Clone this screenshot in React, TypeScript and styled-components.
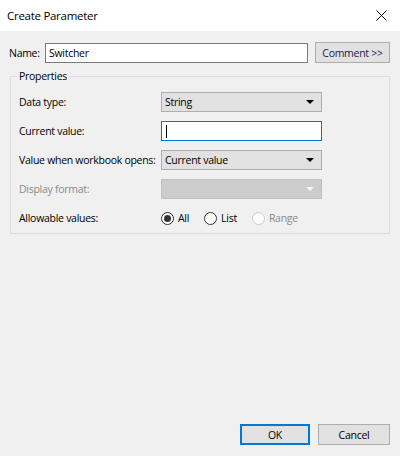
import React from 'react';
import styled, { createGlobalStyle, css } from 'styled-components';

const GlobalStyle = createGlobalStyle`
  html, body {
    margin: 0;
    padding: 0;
    background: #f0f0f0;
  }
  * {
    box-sizing: border-box;
  }
`;

const FONT = `'Open Sans', 'Noto Sans', 'Liberation Sans', sans-serif`;

// Styled Components

const Window = styled.div`
  display: flex;
  width: 400px;
  height: 456px;
  flex-direction: column;
  background: #f0f0f0;
  color: #000000;
  font-family: ${FONT};
  font-size: 10.5px;
  letter-spacing: -0.28px;
  white-space: nowrap;
`;

const TitleBar = styled.div`
  display: flex;
  height: 31px;
  flex-shrink: 0;
  align-items: center;
  justify-content: space-between;
  padding: 0 7px 0 7px;
  background: #ffffff;
  font-size: 11.5px;
`;

const CloseButton = styled.div`
  display: flex;
  width: 24px;
  height: 24px;
  align-items: center;
  justify-content: center;
`;

const Body = styled.div`
  display: flex;
  flex: 1;
  flex-direction: column;
  padding: 11px 10px 11px 9px;
`;

const NameRow = styled.div`
  display: flex;
  align-items: center;
  height: 21px;
`;

const NameLabel = styled.span`
  width: 36px;
`;

const TextBox = styled.div<{ $focused?: boolean; $width: number }>`
  display: flex;
  width: ${p => p.$width}px;
  height: 20px;
  align-items: center;
  padding: 0 3px;
  border: 1px solid ${p => (p.$focused ? '#0078d7' : '#7a7a7a')};
  background: #ffffff;
`;

const Caret = styled.span`
  width: 1px;
  height: 13px;
  margin-left: 1px;
  background: #000000;
`;

const Button = styled.div<{ $default?: boolean; $width: number }>`
  display: flex;
  width: ${p => p.$width}px;
  height: 21px;
  align-items: center;
  justify-content: center;
  border: 1px solid #adadad;
  background: #e1e1e1;

  ${p =>
    p.$default &&
    css`
      border-color: #0078d7;
      box-shadow: inset 0 0 0 1px #0078d7;
    `}
`;

const CommentButton = styled(Button)`
  margin-left: 7px;
  color: #222244;
`;

const GroupBox = styled.fieldset`
  margin: 5px 0 0 1px;
  padding: 8px 8px 5px 8px;
  border: 1px solid #dcdcdc;
`;

const GroupLegend = styled.legend`
  padding: 0 2px;
  margin-left: -2px;
  line-height: 16px;
`;

const PropertyGrid = styled.div`
  display: grid;
  grid-template-columns: 142px 161px;
  grid-auto-rows: 20px;
  row-gap: 9px;
  align-items: center;
`;

const PropertyLabel = styled.span<{ $disabled?: boolean }>`
  color: ${p => (p.$disabled ? '#8a8a8a' : '#000000')};
`;

const DropDown = styled.div<{ $disabled?: boolean }>`
  display: flex;
  height: 20px;
  align-items: center;
  justify-content: space-between;
  padding: 0 7px 0 3px;
  border: 1px solid ${p => (p.$disabled ? '#bfbfbf' : '#adadad')};
  background: ${p => (p.$disabled ? '#cccccc' : '#e1e1e1')};
`;

const Arrow = styled.span<{ $disabled?: boolean }>`
  width: 0;
  height: 0;
  border-top: 4px solid ${p => (p.$disabled ? '#f4f4f4' : '#000000')};
  border-right: 4px solid transparent;
  border-left: 4px solid transparent;
`;

const RadioGroup = styled.div`
  display: flex;
  align-items: center;
  gap: 15px;
`;

const RadioOption = styled.label<{ $disabled?: boolean }>`
  display: flex;
  align-items: center;
  gap: 4px;
  color: ${p => (p.$disabled ? '#8a8a8a' : '#000000')};
`;

const RadioCircle = styled.span<{ $checked?: boolean; $disabled?: boolean }>`
  display: flex;
  width: 13px;
  height: 13px;
  align-items: center;
  justify-content: center;
  border: 1px solid ${p => (p.$disabled ? '#cccccc' : '#333333')};
  border-radius: 50%;
  background: #ffffff;

  &::after {
    content: '';
    display: ${p => (p.$checked ? 'block' : 'none')};
    width: 7px;
    height: 7px;
    border-radius: 50%;
    background: #333333;
  }
`;

const Footer = styled.div`
  display: flex;
  margin-top: auto;
  justify-content: flex-end;
  gap: 8px;
`;

// Function Components

type RadioProps = {
  label: string;
  checked?: boolean;
  disabled?: boolean;
};

const Radio = ({ label, checked, disabled }: RadioProps) => (
  <RadioOption $disabled={disabled}>
    <RadioCircle $checked={checked} $disabled={disabled} />
    {label}
  </RadioOption>
);

type SelectProps = {
  value?: string;
  disabled?: boolean;
};

const Select = ({ value, disabled }: SelectProps) => (
  <DropDown $disabled={disabled}>
    <span>{value}</span>
    <Arrow $disabled={disabled} />
  </DropDown>
);

const App = () => (
  <Window>
    <GlobalStyle />
    <TitleBar>
      <span>Create Parameter</span>
      <CloseButton>
        <svg width="11" height="11" viewBox="0 0 11 11">
          <path d="M0.5 0.5 L10.5 10.5 M10.5 0.5 L0.5 10.5" stroke="#000" strokeWidth="1" />
        </svg>
      </CloseButton>
    </TitleBar>
    <Body>
      <NameRow>
        <NameLabel>Name:</NameLabel>
        <TextBox $width={263}>Switcher</TextBox>
        <CommentButton $width={75}>Comment &gt;&gt;</CommentButton>
      </NameRow>
      <GroupBox>
        <GroupLegend>Properties</GroupLegend>
        <PropertyGrid>
          <PropertyLabel>Data type:</PropertyLabel>
          <Select value="String" />
          <PropertyLabel>Current value:</PropertyLabel>
          <TextBox $focused $width={161}>
            <Caret />
          </TextBox>
          <PropertyLabel>Value when workbook opens:</PropertyLabel>
          <Select value="Current value" />
          <PropertyLabel $disabled>Display format:</PropertyLabel>
          <Select disabled />
          <PropertyLabel>Allowable values:</PropertyLabel>
          <RadioGroup>
            <Radio label="All" checked />
            <Radio label="List" />
            <Radio label="Range" disabled />
          </RadioGroup>
        </PropertyGrid>
      </GroupBox>
      <Footer>
        <Button $default $width={70}>OK</Button>
        <Button $width={72}>Cancel</Button>
      </Footer>
    </Body>
  </Window>
);

export default App;
